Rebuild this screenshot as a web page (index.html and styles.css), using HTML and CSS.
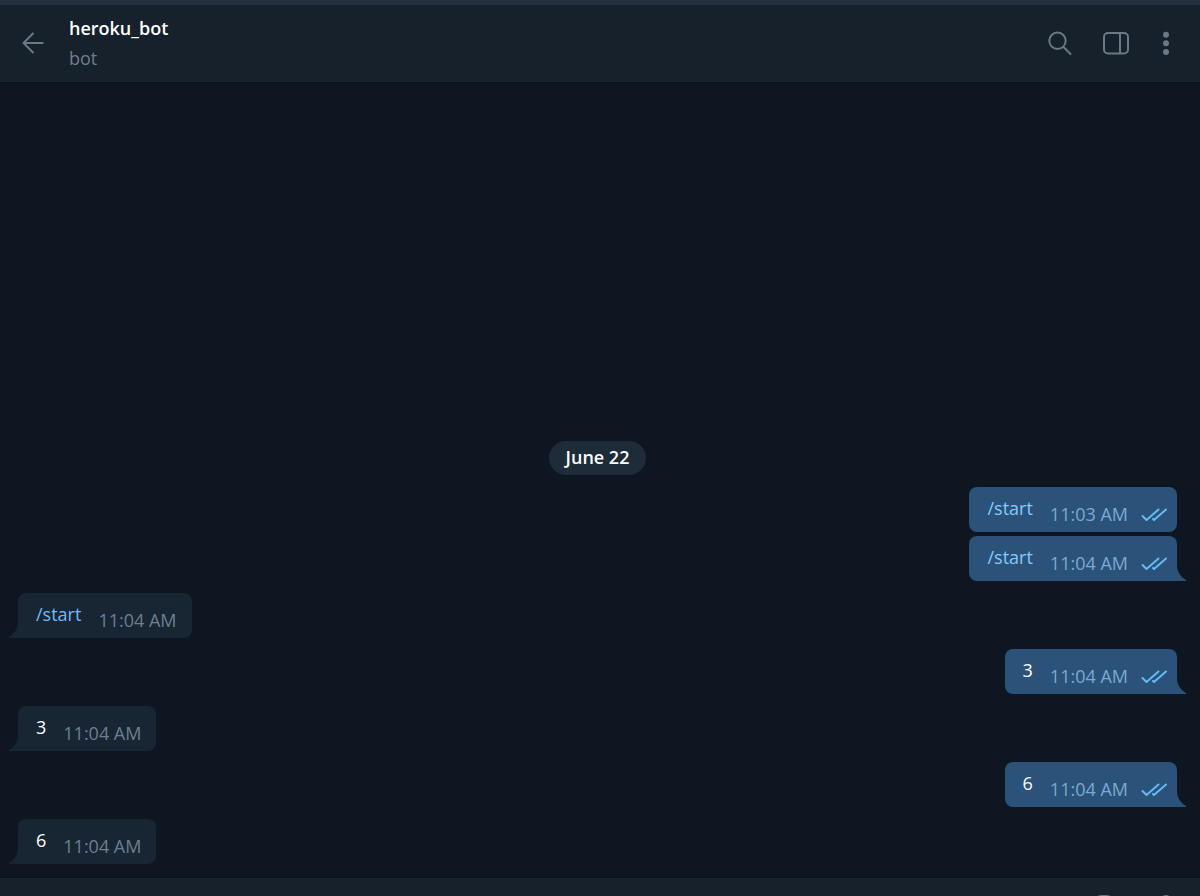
FILE: index.html
```
<!DOCTYPE html>
<html lang="en">
<head>
    <meta charset="UTF-8">
    <meta name="viewport" content="width=device-width, initial-scale=1.0">
    <title>heroku_bot</title>
    <link rel="stylesheet" href="styles.css">
</head>
<body>
    <!-- Check marks shared by all sent messages -->
    <svg class="sprite" aria-hidden="true">
        <symbol id="checks" viewBox="0 0 26 16">
            <path d="M1.500 9l4 4L17.500 2.500M12 12l1 1L25 2.500" />
        </symbol>
    </svg>

    <div class="chat">
        <header class="chat-header">
            <button class="icon-button back" aria-label="Back">
                <svg width="24" height="24" viewBox="0 0 24 24"><path d="M21.700 12H2.500M12 2.500L2.500 12L12 21.500" /></svg>
            </button>
            <div class="peer">
                <h1 class="peer-name">heroku_bot</h1>
                <span class="peer-status">bot</span>
            </div>
            <div class="actions">
                <button class="icon-button" aria-label="Search">
                    <svg width="26" height="26" viewBox="0 0 26 26"><circle cx="10.500" cy="10.800" r="8.200" /><path d="M16.500 17l7 7" /></svg>
                </button>
                <button class="icon-button" aria-label="Toggle side panel">
                    <svg width="26" height="26" viewBox="0 0 26 26"><rect x="1" y="3" width="24" height="20.500" rx="4" /><path d="M17 3v20" /></svg>
                </button>
                <button class="icon-button" aria-label="More">
                    <svg class="dots" width="14" height="26" viewBox="0 0 14 26"><circle cx="7" cy="4.700" r="3" /><circle cx="7" cy="13.300" r="3" /><circle cx="7" cy="22" r="3" /></svg>
                </button>
            </div>
        </header>

        <main class="messages">
            <div class="date">June 22</div>
            <div class="message out first">
                <a class="text" href="#">/start</a>
                <span class="time">11:03 AM</span>
                <svg class="checks"><use href="#checks" /></svg>
            </div>
            <div class="message out next tail">
                <a class="text" href="#">/start</a>
                <span class="time">11:04 AM</span>
                <svg class="checks"><use href="#checks" /></svg>
            </div>
            <div class="message in tail">
                <a class="text" href="#">/start</a>
                <span class="time">11:04 AM</span>
            </div>
            <div class="message out tail">
                <span class="text">3</span>
                <span class="time">11:04 AM</span>
                <svg class="checks"><use href="#checks" /></svg>
            </div>
            <div class="message in tail">
                <span class="text">3</span>
                <span class="time">11:04 AM</span>
            </div>
            <div class="message out tail">
                <span class="text">6</span>
                <span class="time">11:04 AM</span>
                <svg class="checks"><use href="#checks" /></svg>
            </div>
            <div class="message in tail">
                <span class="text">6</span>
                <span class="time">11:04 AM</span>
            </div>
        </main>

        <!-- Only the top edge of the composer is in view -->
        <footer class="composer">
            <button class="icon-button" aria-label="Commands">
                <svg width="26" height="26" viewBox="0 0 26 26"><rect x="2" y="1" width="22" height="22" rx="9" /></svg>
            </button>
            <button class="icon-button" aria-label="Record voice message">
                <svg width="26" height="26" viewBox="0 0 26 26"><rect x="8" y="1" width="10" height="16" rx="5" /></svg>
            </button>
        </footer>
    </div>
</body>
</html>
```

FILE: styles.css
```
* {
    box-sizing: border-box;
}
body {
    margin: 0;
    font-family: "Open Sans", "Noto Sans", sans-serif;
    font-size: 18px;
    line-height: 24px;
    color: #fff;
    background-color: #0e1621;
}
.sprite {
    display: none;
}
.chat {
    display: flex;
    flex-direction: column;
    height: 100vh;
    overflow: hidden;
    border-top: 5px solid #242f3d;
}
svg {
    display: block;
    fill: none;
    stroke: #6c7883;
    stroke-width: 2;
    stroke-linecap: round;
    stroke-linejoin: round;
}
.icon-button {
    padding: 0;
    border: none;
    background: none;
    cursor: pointer;
}
.chat-header {
    display: flex;
    align-items: center;
    flex-shrink: 0;
    height: 78px;
    padding: 0 27px 1px 21px;
    background-color: #17212b;
    border-bottom: 1px solid #0a121b;
}
.peer {
    flex: 1;
    margin-left: 24px;
}
.peer-name {
    margin: 0 0 6px;
    font-size: 18px;
    line-height: 24px;
    font-weight: 600;
}
.peer-status {
    display: block;
    color: #6d7f8f;
}
.actions {
    display: flex;
    gap: 30px;
}
.dots {
    fill: #6c7883;
    stroke: none;
}
.messages {
    flex: 1;
    display: flex;
    flex-direction: column;
    justify-content: flex-end;
    padding: 0 23px 13px 18px;
}
.date {
    align-self: center;
    height: 34px;
    padding: 0 17px;
    border-radius: 17px;
    line-height: 32px;
    font-weight: 600;
    background-color: #1e2c3a;
}
.message {
    position: relative;
    display: flex;
    height: 45px;
    padding: 9px 15px 0 18px;
    border-radius: 8px;
}
.in {
    align-self: flex-start;
    margin-top: 12px;
    background-color: #182533;
}
.out {
    align-self: flex-end;
    margin-top: 11px;
    padding-right: 10px;
    background-color: #2b5278;
}
.first {
    margin-top: 12px;
}
.next {
    margin-top: 4px;
}
/* Bubble tails */
.tail::after {
    content: "";
    position: absolute;
    bottom: 0;
    width: 18px;
    height: 16px;
    background-color: inherit;
}
.in.tail::after {
    left: -9px;
    clip-path: path("M9 0C9 7 5 12 0 15V16H18V0Z");
}
.out.tail::after {
    right: -9px;
    clip-path: path("M9 0C9 7 13 12 18 15V16H0V0Z");
}
.text {
    color: #fff;
    text-decoration: none;
}
a.text {
    color: #70baf5;
}
.out a.text {
    color: #83caff;
}
.time {
    margin: 6px 0 0 17px;
    color: #6d7f8f;
}
.out .time {
    color: #7da8d3;
}
.checks {
    width: 26px;
    height: 16px;
    margin: 11px 0 0 13px;
    stroke: #65b9f4;
}
.composer {
    display: flex;
    flex-shrink: 0;
    justify-content: flex-end;
    align-items: flex-start;
    gap: 36px;
    height: 19px;
    padding: 17px 21px 0;
    background-color: #17212b;
    border-top: 1px solid #0a121b;
}
```
